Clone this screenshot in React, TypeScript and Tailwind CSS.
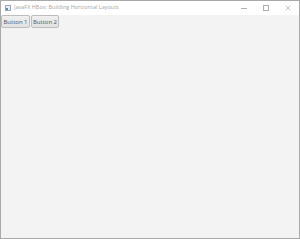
export default function App() {
  return (
    <div className="w-[300px] h-[239px] flex flex-col border border-[#a9a9a9] bg-[#f3f3f3] font-['Segoe_UI','Open_Sans',sans-serif] overflow-hidden">
      <div className="h-[14px] bg-white flex items-center">
        <div className="ml-[4px] w-[6px] h-[6px] border border-[#9aa6b2] bg-[#e8eef3] flex items-end justify-start">
          <div className="w-[2px] h-[2px] bg-[#5e8db5]" />
        </div>
        <span className="ml-[3px] text-[5.5px] leading-none text-[#a6a6a6] whitespace-nowrap">
          JavaFX HBox: Building Horizontal Layouts
        </span>
        <div className="ml-auto flex items-center h-full">
          <div className="w-[22px] flex justify-center">
            <div className="w-[6px] h-px bg-[#b0b0b0]" />
          </div>
          <div className="w-[22px] flex justify-center">
            <div className="w-[6px] h-[6px] border border-[#b0b0b0]" />
          </div>
          <div className="w-[22px] flex justify-center">
            <svg width="6" height="6" viewBox="0 0 6 6">
              <path d="M0.5 0.5 L5.5 5.5 M5.5 0.5 L0.5 5.5" stroke="#b0b0b0" strokeWidth="0.7" />
            </svg>
          </div>
        </div>
      </div>
      <div className="flex">
        <button className="h-[13px] w-[29px] px-0 rounded-[2px] border border-[#bdbdbd] bg-gradient-to-b from-[#f0f0f0] to-[#e2e2e2] text-[6px] leading-none text-[#555]">
          Button 1
        </button>
        <button className="ml-px h-[13px] w-[28px] px-0 rounded-[2px] border border-[#bdbdbd] bg-gradient-to-b from-[#f0f0f0] to-[#e2e2e2] text-[6px] leading-none text-[#555]">
          Button 2
        </button>
      </div>
    </div>
  )
}
